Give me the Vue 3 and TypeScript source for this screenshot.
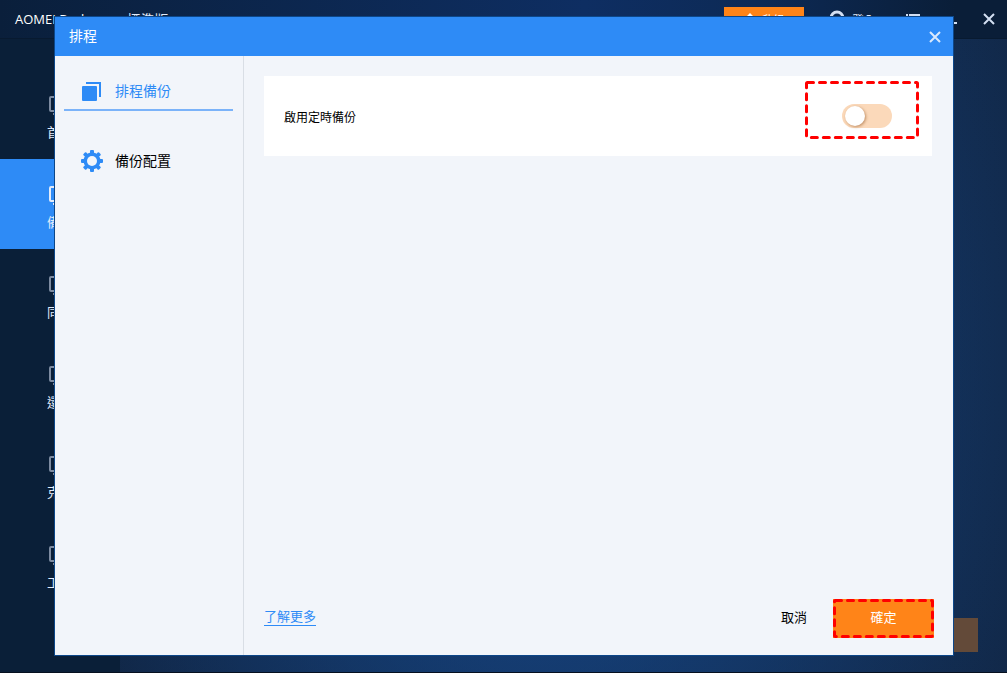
<script setup lang="ts">
import { ref } from 'vue'

const navItems: string[] = ['首頁', '備份', '同步', '還原', '克隆', '工具']
const activeNav = ref(1)
const enabled = ref(false)
</script>

<template>
  <div class="app">
    <header class="titlebar">
      <span class="brand">AOMEI Backupper</span>
      <span class="edition">標準版</span>
      <div class="tools">
        <button class="upgrade" type="button">
          <svg width="14" height="14" viewBox="0 0 14 14" aria-hidden="true"><path d="M7 1 L13 7 H10 V13 H4 V7 H1 Z" fill="#fff" /></svg>
          升級
        </button>
        <button class="login" type="button">
          <svg width="18" height="18" viewBox="0 0 18 18" aria-hidden="true"><circle cx="9" cy="8" r="6" fill="none" stroke="#d3dff2" stroke-width="3" /></svg>
          登入
        </button>
        <button class="win" type="button" aria-label="選單">
          <svg width="14" height="14" viewBox="0 0 14 14" aria-hidden="true"><path d="M0 3H2M3 3H14M0 8H2M3 8H14M0 13H2M3 13H14" stroke="#d3dff2" stroke-width="2" /></svg>
        </button>
        <button class="win" type="button" aria-label="最小化">
          <svg width="12" height="14" viewBox="0 0 12 14" aria-hidden="true"><path d="M0 11H12" stroke="#d3dff2" stroke-width="2" /></svg>
        </button>
        <button class="win" type="button" aria-label="關閉視窗">
          <svg width="12" height="12" viewBox="0 0 12 12" aria-hidden="true"><path d="M1 1L11 11M11 1L1 11" stroke="#d3dff2" stroke-width="2" /></svg>
        </button>
      </div>
    </header>

    <div class="workspace">
      <nav class="sidebar">
        <button
          v-for="(item, i) in navItems"
          :key="item"
          type="button"
          class="nav-item"
          :class="{ active: i === activeNav }"
          @click="activeNav = i"
        >
          <svg width="22" height="20" viewBox="0 0 22 20" fill="none" stroke="currentColor" stroke-width="2" aria-hidden="true">
            <rect x="1" y="1" width="20" height="14" rx="1" />
            <path d="M4 18H18" />
          </svg>
          <span>{{ item }}</span>
        </button>
      </nav>
      <main class="canvas">
        <button class="start" type="button" aria-label="開始備份"></button>
      </main>
    </div>

    <section class="dialog" role="dialog" aria-labelledby="dialog-title">
      <header class="dialog-head">
        <h1 id="dialog-title">排程</h1>
        <button type="button" class="dialog-close" aria-label="關閉">
          <svg width="12" height="12" viewBox="0 0 12 12" aria-hidden="true"><path d="M1 1L11 11M11 1L1 11" stroke="#d9e9fd" stroke-width="2" /></svg>
        </button>
      </header>
      <div class="dialog-body">
        <nav class="tabs">
          <button type="button" class="tab selected">
            <svg width="24" height="24" viewBox="0 0 24 24" aria-hidden="true">
              <rect x="2" y="7" width="15" height="15" rx="1" fill="#2e8bf6" />
              <path d="M6 4H20V18" fill="none" stroke="#2e8bf6" stroke-width="2" />
            </svg>
            <span>排程備份</span>
          </button>
          <button type="button" class="tab">
            <svg width="24" height="24" viewBox="0 0 24 24" aria-hidden="true">
              <g fill="#2e8bf6">
                <rect v-for="a in [0, 45, 90, 135]" :key="a" x="10" y="1" width="4" height="22" rx="1" :transform="`rotate(${a} 12 12)`" />
                <circle cx="12" cy="12" r="8.5" />
              </g>
              <circle cx="12" cy="12" r="5" fill="#f2f5fa" />
            </svg>
            <span>備份配置</span>
          </button>
        </nav>
        <div class="pane">
          <div class="card">
            <label for="schedule-enabled">啟用定時備份</label>
            <div class="highlight">
              <svg class="dashes" aria-hidden="true">
                <rect class="frame" x="1.5" y="1.5" rx="1" />
              </svg>
              <input id="schedule-enabled" v-model="enabled" type="checkbox" role="switch" class="switch" />
            </div>
          </div>
          <footer class="actions">
            <a href="#more">了解更多</a>
            <button type="button" class="cancel">取消</button>
            <button type="button" class="confirm">
              <svg class="dashes" aria-hidden="true">
                <rect class="frame" x="1.5" y="1.5" rx="1" />
              </svg>
              確定
            </button>
          </footer>
        </div>
      </div>
    </section>
  </div>
</template>

<style>
body {
  margin: 0;
}
</style>

<style scoped>
* {
  box-sizing: border-box;
}

.app {
  position: relative;
  display: flex;
  flex-direction: column;
  min-height: 100vh;
  overflow: hidden;
  border-bottom: 1px solid #06101f;
  background:
    radial-gradient(ellipse 54% 110% at 54% 52%, #174c92 0%, rgba(23, 76, 146, 0) 100%),
    linear-gradient(90deg, #10233f 0%, #112746 100%);
  color: #e2ebfa;
  font-family: "Liberation Sans", "Noto Sans CJK TC", sans-serif;
  font-size: 12px;
}

button {
  padding: 0;
  border: 0;
  background: none;
  color: inherit;
  font: inherit;
  cursor: pointer;
}

svg {
  display: block;
  flex: none;
}

.titlebar {
  display: flex;
  align-items: center;
  height: 39px;
  padding: 0 9px 0 15px;
  border-bottom: 1px solid #081a30;
  background: linear-gradient(90deg, #0a1f3b 0%, #0e2e62 58%, #0d2a56 75%, #0a1e38 95%);
  font-size: 14px;
}

.brand {
  font-family: "Open Sans", sans-serif;
  font-size: 13px;
  color: #fff;
}

.edition {
  margin-left: 2px;
}

.tools {
  display: flex;
  align-items: center;
  gap: 20px;
  margin-left: auto;
}

.upgrade {
  display: flex;
  align-items: center;
  justify-content: center;
  gap: 4px;
  width: 80px;
  height: 24px;
  background: #ff8418;
  color: #fff;
  font-size: 12px;
}

.login {
  display: flex;
  align-items: center;
  gap: 6px;
  width: 52px;
  margin: 0 4px;
  font-size: 12px;
}

.win {
  width: 18px;
  display: flex;
  justify-content: center;
}

.workspace {
  display: flex;
  flex: 1;
}

.sidebar {
  width: 120px;
  padding-top: 30px;
  background: #0a1f38;
}

.nav-item {
  display: flex;
  flex-direction: column;
  align-items: center;
  gap: 9px;
  width: 100%;
  height: 90px;
  padding-top: 27px;
  font-size: 13px;
  line-height: 16px;
}

.nav-item svg {
  color: #7d8ba1;
}

.nav-item.active {
  background: #2e8bf6;
}

.nav-item.active svg {
  color: #e2ebfa;
}

.canvas {
  display: flex;
  flex: 1;
  align-items: flex-end;
  justify-content: flex-end;
  padding: 0 29px 20px;
}

.start {
  width: 100px;
  height: 34px;
  background: #634a39;
}

.dialog {
  position: absolute;
  inset: 16px 53px 16px 54px;
  display: flex;
  flex-direction: column;
  border: 1px solid #0d4789;
  background: #f2f5fa;
  color: #000;
}

.dialog-head {
  display: flex;
  align-items: center;
  justify-content: space-between;
  height: 39px;
  padding: 0 12px 0 14px;
  background: #2e8bf6;
  color: #fff;
}

h1 {
  margin: 0;
  padding-bottom: 4px;
  font-size: 14px;
  font-weight: 400;
}

.dialog-body {
  display: flex;
  flex: 1;
}

.tabs {
  display: flex;
  flex-direction: column;
  gap: 31px;
  width: 189px;
  padding: 16px 10px 0 9px;
  border-right: 1px solid #d9dee5;
}

.tab {
  display: flex;
  align-items: center;
  gap: 11px;
  height: 39px;
  padding-left: 16px;
  border-bottom: 2px solid transparent;
  font-size: 14px;
}

.tab span {
  padding-bottom: 2px;
}

.tab.selected {
  border-color: #7bb3f9;
  color: #2e8bf6;
}

.pane {
  display: flex;
  flex: 1;
  flex-direction: column;
  justify-content: space-between;
  padding: 20px 21px 17px 20px;
}

.card {
  display: flex;
  align-items: center;
  justify-content: space-between;
  height: 80px;
  padding: 0 13px 0 20px;
  background: #fff;
}

.highlight {
  position: relative;
  display: flex;
  align-items: center;
  width: 114px;
  height: 58px;
  margin-bottom: 12px;
  padding: 12px 0 0 37px;
}

.dashes {
  position: absolute;
  inset: 0;
  width: 100%;
  height: 100%;
  pointer-events: none;
}

.frame {
  width: calc(100% - 3px);
  height: calc(100% - 3px);
  fill: none;
  stroke: #f00;
  stroke-width: 3px;
  stroke-linecap: round;
  stroke-dasharray: 6px 6px;
}

.switch {
  display: flex;
  align-items: center;
  width: 50px;
  height: 24px;
  margin: 0;
  padding: 0 3px;
  border-radius: 12px;
  appearance: none;
  background: #fbd9ba;
  cursor: pointer;
}

.switch::before {
  width: 20px;
  height: 20px;
  border-radius: 50%;
  background: #fff;
  box-shadow: 1px 1px 3px rgba(150, 90, 40, 0.6);
  content: "";
}

.switch:checked {
  justify-content: flex-end;
  background: #ff8418;
}

.actions {
  display: flex;
  align-items: center;
  font-size: 13px;
}

.actions a {
  margin-right: auto;
  margin-bottom: 3px;
  border-bottom: 1px solid #2e8bf6;
  color: #2e8bf6;
  line-height: 16px;
  text-decoration: none;
}

.cancel {
  margin-right: 26px;
  padding-bottom: 4px;
}

.confirm {
  position: relative;
  width: 101px;
  height: 39px;
  margin-right: -2px;
  padding-bottom: 4px;
  background: #ff8418;
  color: #fff;
}
</style>
